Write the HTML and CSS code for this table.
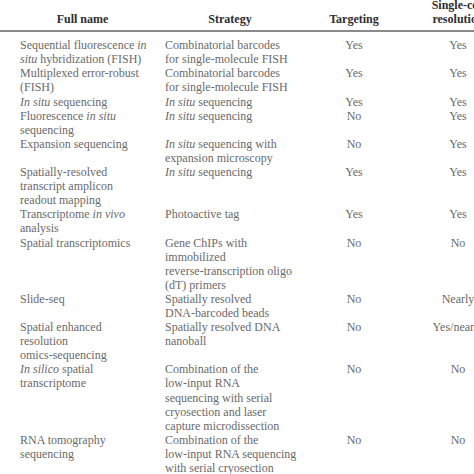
FILE: index.html
```html
<!DOCTYPE html>
<html lang="en">
<head>
<meta charset="utf-8">
<title>Spatial transcriptomics methods</title>
<link rel="stylesheet" href="styles.css">
</head>
<body>
<table class="methods">
  <colgroup>
    <col class="c-name">
    <col class="c-strategy">
    <col class="c-target">
    <col class="c-single">
  </colgroup>
  <thead>
    <tr>
      <th>Full name</th>
      <th>Strategy</th>
      <th>Targeting</th>
      <th>Single-cell<br>resolution</th>
    </tr>
  </thead>
  <tbody>
    <tr class="first">
      <td class="name">Sequential fluorescence <i>in</i><br><i>situ</i> hybridization (FISH)</td>
      <td class="strategy">Combinatorial barcodes<br>for single-molecule FISH</td>
      <td class="val">Yes</td>
      <td class="val">Yes</td>
    </tr>
    <tr>
      <td class="name">Multiplexed error-robust<br>(FISH)</td>
      <td class="strategy">Combinatorial barcodes<br>for single-molecule FISH</td>
      <td class="val">Yes</td>
      <td class="val">Yes</td>
    </tr>
    <tr>
      <td class="name"><i>In situ</i> sequencing</td>
      <td class="strategy"><i>In situ</i> sequencing</td>
      <td class="val">Yes</td>
      <td class="val">Yes</td>
    </tr>
    <tr>
      <td class="name">Fluorescence <i>in situ</i><br>sequencing</td>
      <td class="strategy"><i>In situ</i> sequencing</td>
      <td class="val">No</td>
      <td class="val">Yes</td>
    </tr>
    <tr>
      <td class="name">Expansion sequencing</td>
      <td class="strategy"><i>In situ</i> sequencing with<br>expansion microscopy</td>
      <td class="val">No</td>
      <td class="val">Yes</td>
    </tr>
    <tr>
      <td class="name">Spatially-resolved<br>transcript amplicon<br>readout mapping</td>
      <td class="strategy"><i>In situ</i> sequencing</td>
      <td class="val">Yes</td>
      <td class="val">Yes</td>
    </tr>
    <tr>
      <td class="name">Transcriptome <i>in vivo</i><br>analysis</td>
      <td class="strategy">Photoactive tag</td>
      <td class="val">Yes</td>
      <td class="val">Yes</td>
    </tr>
    <tr>
      <td class="name">Spatial transcriptomics</td>
      <td class="strategy">Gene ChIPs with<br>immobilized<br>reverse-transcription oligo<br>(dT) primers</td>
      <td class="val">No</td>
      <td class="val">No</td>
    </tr>
    <tr>
      <td class="name">Slide-seq</td>
      <td class="strategy">Spatially resolved<br>DNA-barcoded beads</td>
      <td class="val">No</td>
      <td class="val">Nearly</td>
    </tr>
    <tr>
      <td class="name">Spatial enhanced<br>resolution<br>omics-sequencing</td>
      <td class="strategy">Spatially resolved DNA<br>nanoball</td>
      <td class="val">No</td>
      <td class="val">Yes/nearly</td>
    </tr>
    <tr>
      <td class="name"><i>In silico</i> spatial<br>transcriptome</td>
      <td class="strategy">Combination of the<br>low-input RNA<br>sequencing with serial<br>cryosection and laser<br>capture microdissection</td>
      <td class="val">No</td>
      <td class="val">No</td>
    </tr>
    <tr>
      <td class="name">RNA tomography<br>sequencing</td>
      <td class="strategy">Combination of the<br>low-input RNA sequencing<br>with serial cryosection</td>
      <td class="val">No</td>
      <td class="val">No</td>
    </tr>
  </tbody>
</table>
</body>
</html>
```

FILE: styles.css
```css
html, body {
  margin: 0;
  padding: 0;
  background: #ffffff;
  overflow: hidden;
}

.methods {
  border-collapse: collapse;
  table-layout: fixed;
  width: 503px;
  margin-top: -2px;
  font-family: "Liberation Serif", "Times New Roman", serif;
  font-size: 12px;
  line-height: 14.1px;
  color: #6a6a6a;
}

.c-name { width: 165px; }
.c-strategy { width: 130px; }
.c-target { width: 118px; }
.c-single { width: 90px; }

.methods th {
  padding: 0 0 4px;
  font-weight: bold;
  color: #2e2e2e;
  text-align: center;
  vertical-align: bottom;
  border-bottom: 2px solid #8a8a8a;
  white-space: nowrap;
}

.methods td {
  padding: 0;
  vertical-align: top;
  white-space: nowrap;
}

.methods tr.first td {
  padding-top: 6px;
}

.methods td.name {
  padding-left: 20px;
}

.methods td.val {
  text-align: center;
}
```
